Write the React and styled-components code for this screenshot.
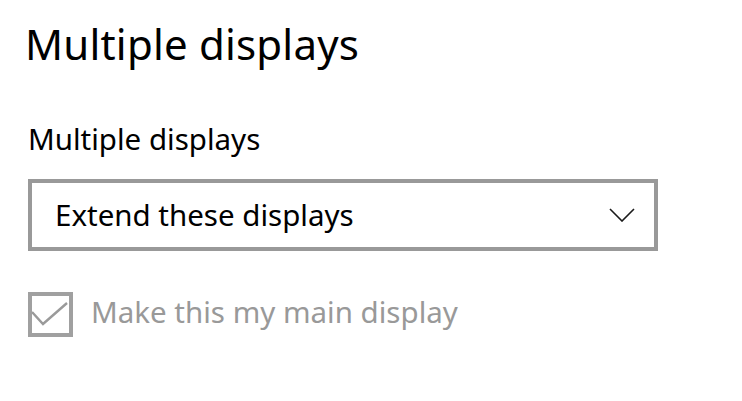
import styled, { createGlobalStyle } from "styled-components";

const GlobalStyle = createGlobalStyle`
    html, body {
        margin: 0;
        padding: 0;
        background: #ffffff;
    }
    body {
        font-family: "Noto Sans", "Open Sans", sans-serif;
        color: #000000;
    }
`;

export default function App() {
    return (
        <>
            <GlobalStyle />
            <Page>
                <Title>Multiple displays</Title>
                <Label>Multiple displays</Label>
                <Dropdown>
                    <DropdownText>Extend these displays</DropdownText>
                    <Chevron viewBox="0 0 26 14">
                        <path d="M1 1 L13 13 L25 1" fill="none" stroke="#1a1a1a" strokeWidth="1.6" />
                    </Chevron>
                </Dropdown>
                <CheckRow>
                    <CheckBox>
                        <svg width="37" height="37" viewBox="0 0 37 37">
                            <path d="M0 16 L11 28 L35 7" fill="none" stroke="#9a9a9a" strokeWidth="2.4" />
                        </svg>
                    </CheckBox>
                    <CheckLabel>Make this my main display</CheckLabel>
                </CheckRow>
            </Page>
        </>
    );
}

const Page = styled.div`
    display: flex;
    flex-direction: column;
    align-items: flex-start;
    padding: 14px 0 0 28px;
`;
const Title = styled.h1`
    margin: 0 0 0 -3px;
    font-size: 42px;
    font-weight: 400;
    line-height: 60px;
    letter-spacing: 0.2px;
`;
const Label = styled.div`
    margin-top: 45px;
    font-size: 29.5px;
    line-height: 40px;
`;
const Dropdown = styled.div`
    margin-top: 20px;
    box-sizing: border-box;
    width: 630px;
    height: 72px;
    border: 4px solid #999999;
    display: flex;
    align-items: center;
    justify-content: space-between;
    padding: 0 19px 0 23px;
`;
const DropdownText = styled.span`
    font-size: 29.5px;
    margin-bottom: 2px;
`;
const Chevron = styled.svg`
    width: 26px;
    height: 14px;
`;
const CheckRow = styled.div`
    margin-top: 40px;
    display: flex;
    align-items: center;
    gap: 18px;
`;
const CheckBox = styled.div`
    box-sizing: border-box;
    width: 45px;
    height: 45px;
    border: 4px solid #a0a0a0;
    display: flex;
    align-items: center;
    justify-content: center;
`;
const CheckLabel = styled.span`
    font-size: 29.5px;
    color: #999999;
    margin-bottom: 6px;
`;
